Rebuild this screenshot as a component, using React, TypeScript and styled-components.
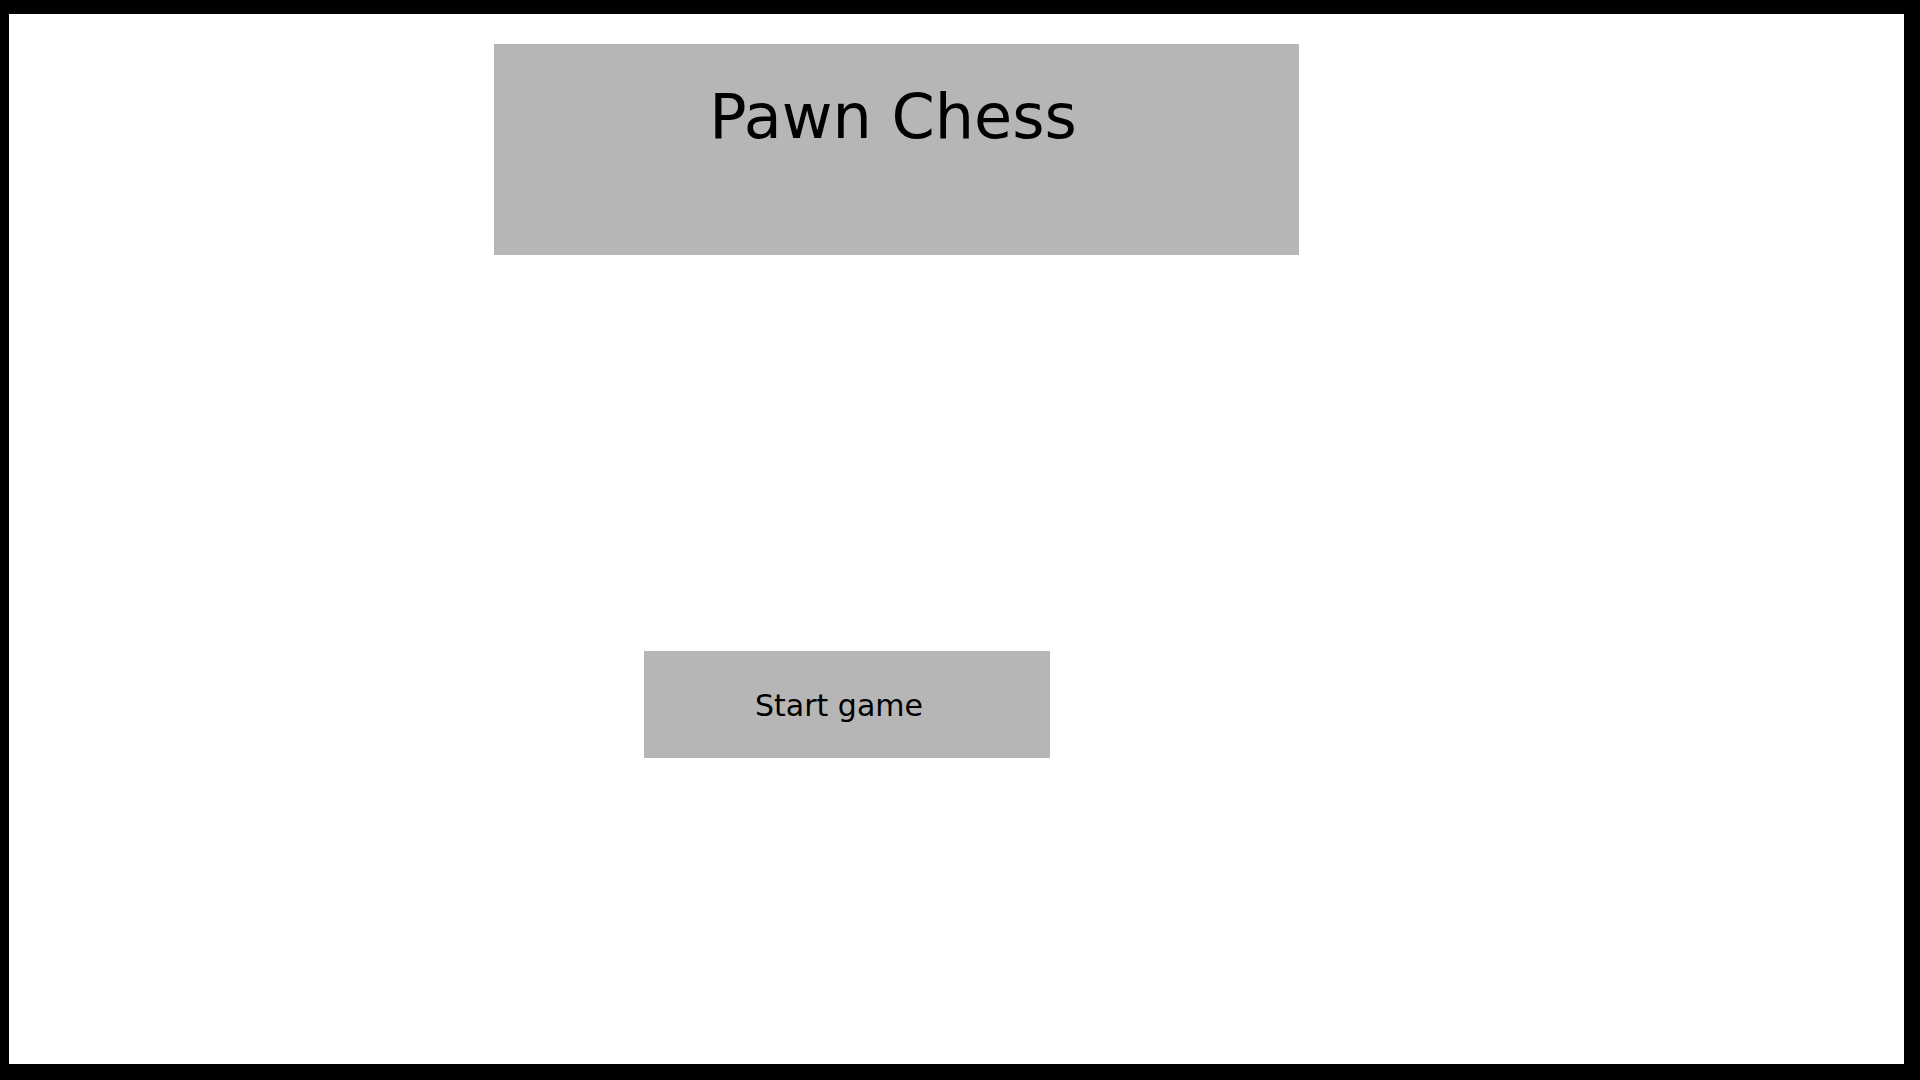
import { FunctionComponent } from "react";
import styled, { createGlobalStyle } from "styled-components";

const GlobalStyle = createGlobalStyle`
	html, body {
		margin: 0;
		padding: 0;
		background: #000;
		font-family: "DejaVu Sans", "Liberation Sans", sans-serif;
	}
	#root {
		padding: 14px 16px 16px 9px;
	}
`;

const Screen = styled.div`
	width: 1895px;
	height: 1050px;
	background: #fff;
	display: flex;
	flex-direction: column;
	align-items: flex-start;
	padding: 30px 0 0 485px;
	box-sizing: border-box;
`;

const TitleBox = styled.div`
	width: 805px;
	height: 211px;
	background: #b6b6b6;
	display: flex;
	justify-content: center;
	padding: 36px 7px 0 0;
	box-sizing: border-box;
`;

const Title = styled.h1`
	margin: 0;
	font-size: 62px;
	font-weight: 400;
	line-height: normal;
	color: #000;
`;

const StartButton = styled.button`
	margin: 396px 0 0 150px;
	width: 406px;
	height: 107px;
	border: none;
	background: #b6b6b6;
	color: #000;
	font-family: inherit;
	font-size: 30px;
	padding: 2px 16px 0 0;
	display: flex;
	align-items: center;
	justify-content: center;
	cursor: pointer;
`;

const App: FunctionComponent = () => {
	return (
		<>
			<GlobalStyle />
			<Screen>
				<TitleBox>
					<Title>Pawn Chess</Title>
				</TitleBox>
				<StartButton>Start game</StartButton>
			</Screen>
		</>
	);
};

export default App;
